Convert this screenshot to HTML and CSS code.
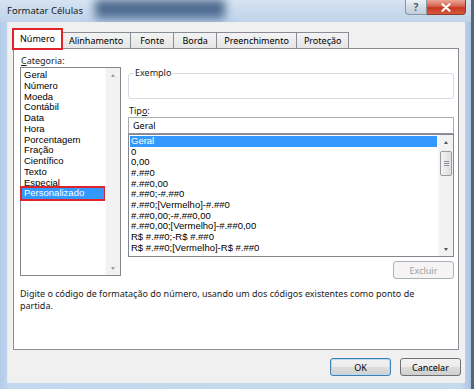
FILE: index.html
```html
<!DOCTYPE html>
<html lang="pt-BR">
<head>
  <meta charset="UTF-8">
  <meta name="viewport" content="width=device-width, initial-scale=1.0">
  <title>Formatar Células</title>
  <link rel="stylesheet" href="styles.css">
</head>
<body>
<div class="window">
  <div class="titlebar">
    <span class="title">Formatar Células</span>
    <span class="ghost"></span>
    <div class="controls">
      <span class="btn-help">?</span>
      <span class="btn-close">
        <svg width="12" height="9" viewBox="0 0 12 9"><path d="M2.5 1.2 L9.5 7.8 M9.5 1.2 L2.5 7.8" stroke="#fff" stroke-width="2.2" stroke-linecap="round"/></svg>
      </span>
    </div>
  </div>

  <div class="client">
    <ul class="tabs">
      <li class="tab active">Número</li>
      <li class="tab">Alinhamento</li>
      <li class="tab">Fonte</li>
      <li class="tab">Borda</li>
      <li class="tab">Preenchimento</li>
      <li class="tab">Proteção</li>
    </ul>

    <div class="panel">
      <div class="cols">
        <div class="col-left">
          <div class="label"><u>C</u>ategoria:</div>
          <div class="listbox category">
            <ul class="items">
              <li>Geral</li>
              <li>Número</li>
              <li>Moeda</li>
              <li>Contábil</li>
              <li>Data</li>
              <li>Hora</li>
              <li>Porcentagem</li>
              <li>Fração</li>
              <li>Científico</li>
              <li>Texto</li>
              <li>Especial</li>
              <li class="selected marked">Personalizado</li>
            </ul>
            <div class="scrollbar off">
              <span class="arrow up"></span>
              <span class="arrow down"></span>
            </div>
          </div>
        </div>

        <div class="col-right">
          <fieldset class="sample">
            <legend>Exemplo</legend>
          </fieldset>
          <div class="label tipo">Tip<u>o</u>:</div>
          <div class="textbox">Geral</div>
          <div class="listbox types">
            <ul class="items">
              <li class="selected">Geral</li>
              <li>0</li>
              <li>0,00</li>
              <li>#.##0</li>
              <li>#.##0,00</li>
              <li>#.##0;-#.##0</li>
              <li>#.##0;[Vermelho]-#.##0</li>
              <li>#.##0,00;-#.##0,00</li>
              <li>#.##0,00;[Vermelho]-#.##0,00</li>
              <li>R$ #.##0;-R$ #.##0</li>
              <li>R$ #.##0;[Vermelho]-R$ #.##0</li>
            </ul>
            <div class="scrollbar">
              <span class="arrow up"></span>
              <span class="thumb">
                <svg width="5" height="5" viewBox="0 0 5 5"><path d="M0 0.5H5M0 2.5H5M0 4.5H5" stroke="#8a8f96" stroke-width="1"/></svg>
              </span>
              <span class="arrow down"></span>
            </div>
          </div>
          <div class="row-right">
            <button class="btn" disabled>Excluir</button>
          </div>
        </div>
      </div>

      <p class="hint">Digite o código de formatação do número, usando um dos códigos existentes como ponto de partida.</p>
    </div>

    <div class="footer">
      <button class="btn default">OK</button>
      <button class="btn">Cancelar</button>
    </div>
  </div>
</div>
</body>
</html>
```

FILE: styles.css
```css
body {
  margin: 0;
  font-family: "Noto Sans", "Open Sans", sans-serif;
  font-size: 9px;
  color: #000;
}
ul {
  list-style: none;
  margin: 0;
  padding: 0;
}

.window {
  width: 471px;
  height: 389px;
  border-right: 3px solid #55667a;
  background-color: #c3d8ee;
  background-image: linear-gradient(to right, #b3cceb, #c3d8ee 10px, #c6daef 460px, #a9c3e2);
  display: flex;
  flex-direction: column;
}

/* title bar */
.titlebar {
  height: 22px;
  flex: none;
  display: flex;
  align-items: flex-start;
  overflow: hidden;
  background-color: #c6d7ea;
  background-image: linear-gradient(180deg, #d6e3f1, #bfd3ea);
}
.title {
  flex: none;
  font-size: 9.5px;
  line-height: 22px;
  margin-left: 7px;
  color: #1a1a1a;
}
/* blurred window behind the glass */
.ghost {
  flex: none;
  width: 130px;
  height: 20px;
  margin-left: 12px;
  background: linear-gradient(180deg, #2c4a72, #3b5b84 70%, #6d8bb0);
  filter: blur(5px);
  opacity: .85;
}
.controls {
  margin-left: auto;
  margin-right: 5px;
  display: flex;
}
.btn-help {
  width: 22px;
  height: 15px;
  box-sizing: border-box;
  border: 1px solid #8794a6;
  border-top: none;
  border-radius: 0 0 0 4px;
  background: linear-gradient(#eef2f7, #d3dbe5 50%, #c3cedb);
  color: #4b5c74;
  font-size: 10px;
  line-height: 14px;
  text-align: center;
  font-weight: bold;
}
.btn-close {
  width: 39px;
  height: 15px;
  box-sizing: border-box;
  border: 1px solid #8d3b2f;
  border-top: none;
  border-left: none;
  border-radius: 0 0 4px 0;
  background: linear-gradient(#e9a697, #d7634d 45%, #c8381f 55%, #d55a3e);
  display: flex;
  align-items: center;
  justify-content: center;
}

/* client area */
.client {
  flex: 1;
  margin: 0 6px 6px 7px;
  padding: 7px 4px 7px 5px;
  background: #f0f0f0;
  border-left: 1px solid #e4ecf5;
  display: flex;
  flex-direction: column;
  box-sizing: border-box;
}

.tabs {
  display: flex;
  align-items: flex-end;
  height: 19px;
}
.tab {
  height: 16px;
  min-width: 44px;
  box-sizing: border-box;
  padding: 0 7px;
  text-align: center;
  line-height: 15px;
  border: 1px solid #898c95;
  border-bottom: none;
  margin-left: -1px;
  background: linear-gradient(#f3f3f3, #e6e6e6);
}
.tab.active {
  height: 20px;
  margin-left: 0;
  margin-bottom: -1px;
  line-height: 18px;
  padding: 0 6px;
  background: #fff;
  position: relative;
  z-index: 1;
  outline: 2px solid #e0222b;
  outline-offset: -1px;
}

.panel {
  flex: 1;
  margin-right: 2px;
  border: 1px solid #898c95;
  background: #fff;
  padding: 6px 5px 0 6px;
}

.cols {
  display: grid;
  grid-template-columns: 101px 326px;
  column-gap: 7px;
  align-items: start;
}

.label {
  line-height: 12px;
  padding-left: 1px;
  color: #1a1a1a;
}
.label u {
  text-decoration-thickness: 1px;
}

.listbox {
  border: 1px solid #828790;
  display: flex;
  background: #fff;
}
.listbox .items {
  flex: 1;
  padding: 2px 1px 0 1px;
  font-family: "Liberation Sans", Arial, sans-serif;
  font-size: 9.5px;
}
.listbox li {
  line-height: 10.75px;
  padding-left: 2px;
  white-space: nowrap;
}
.listbox li.selected {
  background: #3399ff;
  color: #fff;
}
.listbox li.marked {
  outline: 2px solid #e0222b;
  outline-offset: 0;
}

.category {
  height: 209px;
  box-sizing: border-box;
}
.category .items {
  padding-right: 1px;
}

.types {
  height: 123px;
  box-sizing: border-box;
}
.types .items {
  padding-top: 1px;
  padding-right: 1px;
}
.types li {
  line-height: 10.67px;
  padding-left: 1px;
}

.scrollbar {
  width: 14px;
  background: #f2f2f2;
  display: flex;
  flex-direction: column;
  align-items: center;
  border-left: 1px solid #fafafa;
}
.arrow {
  width: 0;
  height: 0;
  border-left: 2.5px solid transparent;
  border-right: 2.5px solid transparent;
  margin: 6px 0;
}
.arrow.up {
  border-bottom: 3px solid #50555c;
}
.arrow.down {
  border-top: 3px solid #50555c;
  margin-top: auto;
  margin-bottom: 5px;
}
.scrollbar.off .arrow.up {
  border-bottom-color: #9a9da2;
}
.scrollbar.off .arrow.down {
  border-top-color: #9a9da2;
}
.thumb {
  width: 12px;
  height: 25px;
  box-sizing: border-box;
  margin-top: 1px;
  border: 1px solid #979aa0;
  border-radius: 2px;
  background: linear-gradient(to right, #f4f4f4, #dedede);
  display: flex;
  align-items: center;
  justify-content: center;
}
.thumb svg {
  display: block;
}

.sample {
  height: 32px;
  box-sizing: border-box;
  margin: 12px 0 0;
  padding: 0 4px;
  border: 1px solid #d5dce3;
  border-radius: 3px;
}
.sample legend {
  padding: 0 1px;
  margin-left: 1px;
  line-height: 12px;
  color: #1a1a1a;
}

.tipo {
  margin-top: 6px;
}
.textbox {
  height: 17px;
  box-sizing: border-box;
  border: 1px solid #abadb3;
  border-bottom-color: #8f929a;
  padding-left: 4px;
  line-height: 15px;
}

.row-right {
  display: flex;
  justify-content: flex-end;
  margin-top: 4px;
}

.btn {
  width: 61px;
  height: 18px;
  padding: 0;
  font-family: inherit;
  font-size: 9px;
  color: #000;
  border: 1px solid #707070;
  border-radius: 3px;
  background: linear-gradient(#f2f2f2, #ebebeb 50%, #dddddd 51%, #cfcfcf);
}
.btn:disabled {
  color: #a0a0a0;
  border-color: #adb2b5;
  background: #f4f4f4;
}
.btn.default {
  border-color: #3c7fb1;
  box-shadow: inset 0 0 0 1px #b7dcf2;
}

.hint {
  margin: 9px 0 0;
  line-height: 11.7px;
  color: #1a1a1a;
  padding-right: 30px;
}

.footer {
  display: flex;
  justify-content: flex-end;
  gap: 9px;
  margin-top: 8px;
}
```
